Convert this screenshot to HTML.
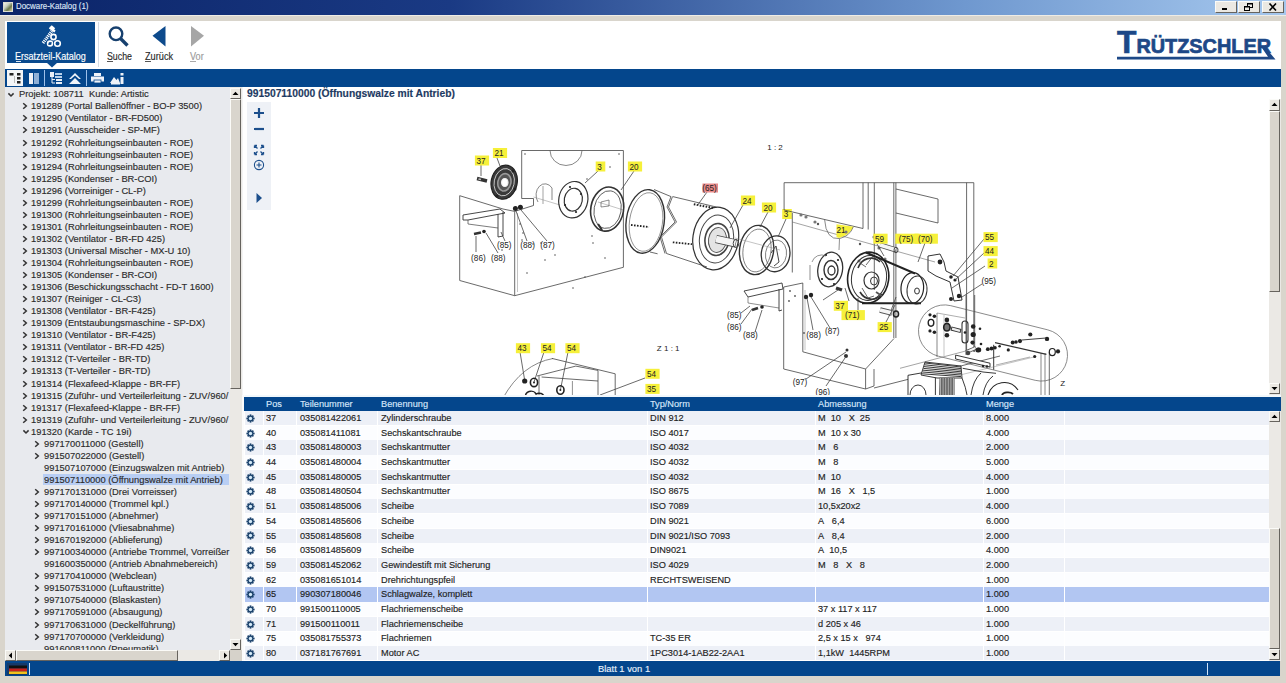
<!DOCTYPE html>
<html><head><meta charset="utf-8"><title>Docware-Katalog</title>
<style>
*{margin:0;padding:0;box-sizing:border-box}
html,body{width:1286px;height:683px;overflow:hidden;position:relative;background:#d9d5cc;font-family:"Liberation Sans",sans-serif;color:#222}
.a{position:absolute}
.t{position:absolute;white-space:pre;line-height:1;-webkit-text-stroke:0.15px currentColor}
.sb{position:absolute;background:#ebe9e5}
.btn{position:absolute;background:#ebe8e2;border-top:1px solid #fbfbf8;border-left:1px solid #fbfbf8;border-right:1px solid #66635e;border-bottom:1px solid #66635e}
</style></head><body>
<div class="a" style="left:0;top:0;width:1286px;height:15px;background:linear-gradient(90deg,#0b2468 0%,#1a3a84 35%,#6f98cf 75%,#a6c8ee 100%)"></div><div class="a" style="left:3px;top:2px;width:10px;height:10px;background:linear-gradient(135deg,#f4f2e8 0%,#c8d0c0 35%,#6c7a4c 65%,#d8d0a0 100%);border:1px solid #dcdcd0"></div><div class="t" style="left:16.3px;top:1.9px;font-size:9.2px;color:#dfe6f6;transform:scaleX(0.86);transform-origin:0 0">Docware-Katalog (1)</div><div class="btn" style="left:1215px;top:1px;width:22px;height:12px"></div><div class="btn" style="left:1238px;top:1px;width:22px;height:12px"></div><div class="btn" style="left:1262px;top:1px;width:22px;height:12px"></div><div class="a" style="left:1222px;top:8px;width:5px;height:2px;background:#000"></div><svg class="a" style="left:1244px;top:3px" width="10" height="8"><rect x="3.5" y="0.5" width="5" height="4" fill="none" stroke="#000"/><rect x="3" y="0" width="6" height="1.5" fill="#000"/><rect x="0.5" y="3.5" width="5" height="4" fill="#ece9e2" stroke="#000"/><rect x="0" y="3" width="6" height="1.5" fill="#000"/></svg><svg class="a" style="left:1268px;top:3px" width="10" height="8"><path d="M1.5 0.5 L8 7.5 M8 0.5 L1.5 7.5" stroke="#000" stroke-width="1.6"/></svg><div class="a" style="left:0;top:15px;width:1286px;height:1px;background:#eeece6"></div><div class="a" style="left:5px;top:21px;width:1276px;height:48px;background:#fff"></div><div class="a" style="left:7px;top:22px;width:88px;height:41px;background:#0a4a8e"></div><svg class="a" style="left:46px;top:62px" width="12" height="6"><path d="M0 0 L6 5.5 L12 0Z" fill="#0a4a8e"/></svg><svg class="a" style="left:38px;top:24px" width="26" height="24" viewBox="0 0 26 24"><g stroke="#fff" fill="none"><path d="M5 19 L14 7" stroke-width="3.2" stroke-dasharray="1.2 0.8"/><path d="M11.5 3.5 L17 7.5 M13 2 L16.5 5" stroke-width="2.2"/><circle cx="15.5" cy="13" r="2.6" stroke-width="1.6"/><circle cx="19.5" cy="19.5" r="2.8" stroke-width="1.6"/><circle cx="12" cy="19.5" r="2.4" stroke-width="1.6"/></g><path d="M10.5 20.5 L13.5 18.5" stroke="#0a4a8e" stroke-width="1"/></svg><div class="t" style="left:15px;top:51.6px;font-size:10.1px;color:#fff;transform:scaleX(0.895);transform-origin:0 0">Ersatzteil-Katalog</div><div class="a" style="left:16px;top:61px;width:5px;height:1px;background:#dfe8f4"></div><div class="a" style="left:107px;top:61px;width:6px;height:1px;background:#555"></div><div class="a" style="left:145px;top:61px;width:6px;height:1px;background:#555"></div><div class="a" style="left:190px;top:61px;width:6px;height:1px;background:#aaa"></div><div class="a" style="left:98px;top:22px;width:1px;height:45px;background:#d4dbe4"></div><svg class="a" style="left:106px;top:25px" width="24" height="23"><circle cx="10" cy="8.8" r="6.3" fill="none" stroke="#17406e" stroke-width="2.4"/><path d="M14.5 13.5 L21.5 20.5" stroke="#17406e" stroke-width="3.4"/></svg><div class="t" style="left:107px;top:51.6px;font-size:10px;color:#2a2a2a;transform:scaleX(0.88);transform-origin:0 0">Suche</div><svg class="a" style="left:152px;top:25px" width="15" height="23"><path d="M0.5 10.8 L13.5 1 L13.5 21.5Z" fill="#0d4a8c"/></svg><div class="t" style="left:145px;top:51.6px;font-size:10px;color:#2a2a2a;transform:scaleX(0.92);transform-origin:0 0">Zurück</div><svg class="a" style="left:190px;top:25px" width="15" height="23"><path d="M1 1 L14 10.8 L1 21.5Z" fill="#a6a6a6"/></svg><div class="t" style="left:190px;top:51.6px;font-size:10px;color:#9a9a9a;transform:scaleX(0.91);transform-origin:0 0">Vor</div><svg class="a" style="left:1110px;top:25px" width="170" height="40" viewBox="0 0 170 40"><text x="7" y="28.4" font-family="Liberation Sans" font-weight="bold" font-size="32" fill="#1d4887" stroke="#1d4887" stroke-width="0.7" textLength="154" lengthAdjust="spacingAndGlyphs">T<tspan font-size="20">RÜTZSCHLER</tspan></text><path d="M7 31.7 L158 31.7 L152 23 L155 22 L165.5 34.6 L7 34.6Z" fill="#1d4887"/></svg><div class="a" style="left:5px;top:69px;width:1276px;height:18px;background:#04468c"></div><div class="a" style="left:7px;top:70px;width:16px;height:16px;background:#f4f6f8"></div><svg class="a" style="left:7px;top:70px" width="16" height="16"><rect x="2.5" y="3" width="4" height="2.5" fill="#222"/><rect x="10" y="3" width="3.5" height="2.5" fill="#222"/><rect x="10" y="7" width="3.5" height="2.5" fill="#222"/><rect x="10" y="11" width="3.5" height="2.5" fill="#222"/><rect x="7" y="6" width="1" height="7" fill="#bbb"/></svg><div class="a" style="left:29px;top:73px;width:4px;height:11px;background:#f0f2f6"></div><div class="a" style="left:34px;top:73px;width:5px;height:11px;background:#8fb0d6"></div><div class="a" style="left:44px;top:70px;width:1px;height:16px;background:#9cc0ea"></div><svg class="a" style="left:50px;top:72px" width="13" height="13"><rect x="0" y="0" width="4" height="5" fill="#e8eef6"/><path d="M2 5 L2 11 L5 11 M2 7.5 L5 7.5" stroke="#e8eef6" fill="none"/><rect x="5" y="1" width="7" height="2" fill="#b8d0ea"/><rect x="5" y="4" width="7" height="2" fill="#b8d0ea"/><rect x="6" y="7" width="6" height="2" fill="#e8eef6"/><rect x="6" y="10" width="6" height="2" fill="#e8eef6"/></svg><svg class="a" style="left:68px;top:72px" width="14" height="13"><path d="M1 7 L7 1 L13 7 L11 7 L7 3.5 L3 7Z M1 12 L7 6 L13 12Z" fill="#f0f4fa"/></svg><div class="a" style="left:86px;top:70px;width:1px;height:16px;background:#9cc0ea"></div><svg class="a" style="left:91px;top:73px" width="13" height="11"><rect x="3" y="0" width="7" height="3" fill="#eef2f8"/><rect x="0" y="3.5" width="13" height="5" fill="#eef2f8"/><rect x="3" y="7" width="7" height="3" fill="#eef2f8" stroke="#04468c" stroke-width="0.8"/></svg><svg class="a" style="left:110px;top:72px" width="14" height="13"><path d="M0 11 L4 5 L6.5 8 L8 6 L10 11Z" fill="#eef2f8"/><rect x="10.5" y="5" width="3" height="7" fill="#eef2f8"/><rect x="10.5" y="1" width="3" height="2.5" fill="#eef2f8"/><rect x="1" y="11" width="9" height="1.5" fill="#eef2f8"/></svg><div class="a" style="left:5px;top:87px;width:225px;height:563px;background:#e8eaee;overflow:hidden"><svg class="a" style="left:2px;top:4.799999999999997px" width="8" height="6"><path d="M1.4 1.4 L4 4 L6.6 1.4" fill="none" stroke="#333" stroke-width="1.5"/></svg><div class="t" style="left:14px;top:3.30px;font-size:9.35px;color:#2c2c2c">Projekt: 108711&nbsp; Kunde: Artistic</div><svg class="a" style="left:16.5px;top:15.349999999999994px" width="6" height="8"><path d="M1.2 1.3 L4.3 4 L1.2 6.7" fill="none" stroke="#333" stroke-width="1.5"/></svg><div class="t" style="left:26px;top:15.35px;font-size:9.35px;color:#2c2c2c">191289 (Portal Ballenöffner - BO-P 3500)</div><svg class="a" style="left:16.5px;top:27.400000000000006px" width="6" height="8"><path d="M1.2 1.3 L4.3 4 L1.2 6.7" fill="none" stroke="#333" stroke-width="1.5"/></svg><div class="t" style="left:26px;top:27.40px;font-size:9.35px;color:#2c2c2c">191290 (Ventilator - BR-FD500)</div><svg class="a" style="left:16.5px;top:39.44999999999999px" width="6" height="8"><path d="M1.2 1.3 L4.3 4 L1.2 6.7" fill="none" stroke="#333" stroke-width="1.5"/></svg><div class="t" style="left:26px;top:39.45px;font-size:9.35px;color:#2c2c2c">191291 (Ausscheider - SP-MF)</div><svg class="a" style="left:16.5px;top:51.5px" width="6" height="8"><path d="M1.2 1.3 L4.3 4 L1.2 6.7" fill="none" stroke="#333" stroke-width="1.5"/></svg><div class="t" style="left:26px;top:51.50px;font-size:9.35px;color:#2c2c2c">191292 (Rohrleitungseinbauten - ROE)</div><svg class="a" style="left:16.5px;top:63.55000000000001px" width="6" height="8"><path d="M1.2 1.3 L4.3 4 L1.2 6.7" fill="none" stroke="#333" stroke-width="1.5"/></svg><div class="t" style="left:26px;top:63.55px;font-size:9.35px;color:#2c2c2c">191293 (Rohrleitungseinbauten - ROE)</div><svg class="a" style="left:16.5px;top:75.60000000000002px" width="6" height="8"><path d="M1.2 1.3 L4.3 4 L1.2 6.7" fill="none" stroke="#333" stroke-width="1.5"/></svg><div class="t" style="left:26px;top:75.60px;font-size:9.35px;color:#2c2c2c">191294 (Rohrleitungseinbauten - ROE)</div><svg class="a" style="left:16.5px;top:87.65px" width="6" height="8"><path d="M1.2 1.3 L4.3 4 L1.2 6.7" fill="none" stroke="#333" stroke-width="1.5"/></svg><div class="t" style="left:26px;top:87.65px;font-size:9.35px;color:#2c2c2c">191295 (Kondenser - BR-COI)</div><svg class="a" style="left:16.5px;top:99.69999999999999px" width="6" height="8"><path d="M1.2 1.3 L4.3 4 L1.2 6.7" fill="none" stroke="#333" stroke-width="1.5"/></svg><div class="t" style="left:26px;top:99.70px;font-size:9.35px;color:#2c2c2c">191296 (Vorreiniger - CL-P)</div><svg class="a" style="left:16.5px;top:111.75px" width="6" height="8"><path d="M1.2 1.3 L4.3 4 L1.2 6.7" fill="none" stroke="#333" stroke-width="1.5"/></svg><div class="t" style="left:26px;top:111.75px;font-size:9.35px;color:#2c2c2c">191299 (Rohrleitungseinbauten - ROE)</div><svg class="a" style="left:16.5px;top:123.80000000000001px" width="6" height="8"><path d="M1.2 1.3 L4.3 4 L1.2 6.7" fill="none" stroke="#333" stroke-width="1.5"/></svg><div class="t" style="left:26px;top:123.80px;font-size:9.35px;color:#2c2c2c">191300 (Rohrleitungseinbauten - ROE)</div><svg class="a" style="left:16.5px;top:135.85000000000002px" width="6" height="8"><path d="M1.2 1.3 L4.3 4 L1.2 6.7" fill="none" stroke="#333" stroke-width="1.5"/></svg><div class="t" style="left:26px;top:135.85px;font-size:9.35px;color:#2c2c2c">191301 (Rohrleitungseinbauten - ROE)</div><svg class="a" style="left:16.5px;top:147.90000000000003px" width="6" height="8"><path d="M1.2 1.3 L4.3 4 L1.2 6.7" fill="none" stroke="#333" stroke-width="1.5"/></svg><div class="t" style="left:26px;top:147.90px;font-size:9.35px;color:#2c2c2c">191302 (Ventilator - BR-FD 425)</div><svg class="a" style="left:16.5px;top:159.95px" width="6" height="8"><path d="M1.2 1.3 L4.3 4 L1.2 6.7" fill="none" stroke="#333" stroke-width="1.5"/></svg><div class="t" style="left:26px;top:159.95px;font-size:9.35px;color:#2c2c2c">191303 (Universal Mischer - MX-U 10)</div><svg class="a" style="left:16.5px;top:172.0px" width="6" height="8"><path d="M1.2 1.3 L4.3 4 L1.2 6.7" fill="none" stroke="#333" stroke-width="1.5"/></svg><div class="t" style="left:26px;top:172.00px;font-size:9.35px;color:#2c2c2c">191304 (Rohrleitungseinbauten - ROE)</div><svg class="a" style="left:16.5px;top:184.05px" width="6" height="8"><path d="M1.2 1.3 L4.3 4 L1.2 6.7" fill="none" stroke="#333" stroke-width="1.5"/></svg><div class="t" style="left:26px;top:184.05px;font-size:9.35px;color:#2c2c2c">191305 (Kondenser - BR-COI)</div><svg class="a" style="left:16.5px;top:196.10000000000002px" width="6" height="8"><path d="M1.2 1.3 L4.3 4 L1.2 6.7" fill="none" stroke="#333" stroke-width="1.5"/></svg><div class="t" style="left:26px;top:196.10px;font-size:9.35px;color:#2c2c2c">191306 (Beschickungsschacht - FD-T 1600)</div><svg class="a" style="left:16.5px;top:208.15000000000003px" width="6" height="8"><path d="M1.2 1.3 L4.3 4 L1.2 6.7" fill="none" stroke="#333" stroke-width="1.5"/></svg><div class="t" style="left:26px;top:208.15px;font-size:9.35px;color:#2c2c2c">191307 (Reiniger - CL-C3)</div><svg class="a" style="left:16.5px;top:220.2px" width="6" height="8"><path d="M1.2 1.3 L4.3 4 L1.2 6.7" fill="none" stroke="#333" stroke-width="1.5"/></svg><div class="t" style="left:26px;top:220.20px;font-size:9.35px;color:#2c2c2c">191308 (Ventilator - BR-F425)</div><svg class="a" style="left:16.5px;top:232.25px" width="6" height="8"><path d="M1.2 1.3 L4.3 4 L1.2 6.7" fill="none" stroke="#333" stroke-width="1.5"/></svg><div class="t" style="left:26px;top:232.25px;font-size:9.35px;color:#2c2c2c">191309 (Entstaubungsmaschine - SP-DX)</div><svg class="a" style="left:16.5px;top:244.3px" width="6" height="8"><path d="M1.2 1.3 L4.3 4 L1.2 6.7" fill="none" stroke="#333" stroke-width="1.5"/></svg><div class="t" style="left:26px;top:244.30px;font-size:9.35px;color:#2c2c2c">191310 (Ventilator - BR-F425)</div><svg class="a" style="left:16.5px;top:256.35px" width="6" height="8"><path d="M1.2 1.3 L4.3 4 L1.2 6.7" fill="none" stroke="#333" stroke-width="1.5"/></svg><div class="t" style="left:26px;top:256.35px;font-size:9.35px;color:#2c2c2c">191311 (Ventilator - BR-FD 425)</div><svg class="a" style="left:16.5px;top:268.40000000000003px" width="6" height="8"><path d="M1.2 1.3 L4.3 4 L1.2 6.7" fill="none" stroke="#333" stroke-width="1.5"/></svg><div class="t" style="left:26px;top:268.40px;font-size:9.35px;color:#2c2c2c">191312 (T-Verteiler - BR-TD)</div><svg class="a" style="left:16.5px;top:280.45000000000005px" width="6" height="8"><path d="M1.2 1.3 L4.3 4 L1.2 6.7" fill="none" stroke="#333" stroke-width="1.5"/></svg><div class="t" style="left:26px;top:280.45px;font-size:9.35px;color:#2c2c2c">191313 (T-Verteiler - BR-TD)</div><svg class="a" style="left:16.5px;top:292.50000000000006px" width="6" height="8"><path d="M1.2 1.3 L4.3 4 L1.2 6.7" fill="none" stroke="#333" stroke-width="1.5"/></svg><div class="t" style="left:26px;top:292.50px;font-size:9.35px;color:#2c2c2c">191314 (Flexafeed-Klappe - BR-FF)</div><svg class="a" style="left:16.5px;top:304.55px" width="6" height="8"><path d="M1.2 1.3 L4.3 4 L1.2 6.7" fill="none" stroke="#333" stroke-width="1.5"/></svg><div class="t" style="left:26px;top:304.55px;font-size:9.35px;color:#2c2c2c">191315 (Zuführ- und Verteilerleitung - ZUV/960/</div><svg class="a" style="left:16.5px;top:316.6px" width="6" height="8"><path d="M1.2 1.3 L4.3 4 L1.2 6.7" fill="none" stroke="#333" stroke-width="1.5"/></svg><div class="t" style="left:26px;top:316.60px;font-size:9.35px;color:#2c2c2c">191317 (Flexafeed-Klappe - BR-FF)</div><svg class="a" style="left:16.5px;top:328.65000000000003px" width="6" height="8"><path d="M1.2 1.3 L4.3 4 L1.2 6.7" fill="none" stroke="#333" stroke-width="1.5"/></svg><div class="t" style="left:26px;top:328.65px;font-size:9.35px;color:#2c2c2c">191319 (Zuführ- und Verteilerleitung - ZUV/960/</div><svg class="a" style="left:17px;top:342.20000000000005px" width="8" height="6"><path d="M1.4 1.4 L4 4 L6.6 1.4" fill="none" stroke="#333" stroke-width="1.5"/></svg><div class="t" style="left:26px;top:340.70px;font-size:9.35px;color:#2c2c2c">191320 (Karde - TC 19i)</div><svg class="a" style="left:28.5px;top:352.75000000000006px" width="6" height="8"><path d="M1.2 1.3 L4.3 4 L1.2 6.7" fill="none" stroke="#333" stroke-width="1.5"/></svg><div class="t" style="left:39px;top:352.75px;font-size:9.35px;color:#2c2c2c">997170011000 (Gestell)</div><svg class="a" style="left:28.5px;top:364.8px" width="6" height="8"><path d="M1.2 1.3 L4.3 4 L1.2 6.7" fill="none" stroke="#333" stroke-width="1.5"/></svg><div class="t" style="left:39px;top:364.80px;font-size:9.35px;color:#2c2c2c">991507022000 (Gestell)</div><div class="t" style="left:39px;top:376.85px;font-size:9.35px;color:#2c2c2c">991507107000 (Einzugswalzen mit Antrieb)</div><div class="a" style="left:38px;top:386.70px;width:186px;height:11px;background:#b8cef4"></div><div class="t" style="left:39px;top:388.90px;font-size:9.35px;color:#2c2c2c">991507110000 (Öffnungswalze mit Antrieb)</div><svg class="a" style="left:28.5px;top:400.95000000000005px" width="6" height="8"><path d="M1.2 1.3 L4.3 4 L1.2 6.7" fill="none" stroke="#333" stroke-width="1.5"/></svg><div class="t" style="left:39px;top:400.95px;font-size:9.35px;color:#2c2c2c">997170131000 (Drei Vorreisser)</div><svg class="a" style="left:28.5px;top:413.00000000000006px" width="6" height="8"><path d="M1.2 1.3 L4.3 4 L1.2 6.7" fill="none" stroke="#333" stroke-width="1.5"/></svg><div class="t" style="left:39px;top:413.00px;font-size:9.35px;color:#2c2c2c">997170140000 (Trommel kpl.)</div><svg class="a" style="left:28.5px;top:425.04999999999995px" width="6" height="8"><path d="M1.2 1.3 L4.3 4 L1.2 6.7" fill="none" stroke="#333" stroke-width="1.5"/></svg><div class="t" style="left:39px;top:425.05px;font-size:9.35px;color:#2c2c2c">997170151000 (Abnehmer)</div><svg class="a" style="left:28.5px;top:437.1px" width="6" height="8"><path d="M1.2 1.3 L4.3 4 L1.2 6.7" fill="none" stroke="#333" stroke-width="1.5"/></svg><div class="t" style="left:39px;top:437.10px;font-size:9.35px;color:#2c2c2c">997170161000 (Vliesabnahme)</div><svg class="a" style="left:28.5px;top:449.15px" width="6" height="8"><path d="M1.2 1.3 L4.3 4 L1.2 6.7" fill="none" stroke="#333" stroke-width="1.5"/></svg><div class="t" style="left:39px;top:449.15px;font-size:9.35px;color:#2c2c2c">991670192000 (Ablieferung)</div><svg class="a" style="left:28.5px;top:461.20000000000005px" width="6" height="8"><path d="M1.2 1.3 L4.3 4 L1.2 6.7" fill="none" stroke="#333" stroke-width="1.5"/></svg><div class="t" style="left:39px;top:461.20px;font-size:9.35px;color:#2c2c2c">997100340000 (Antriebe Trommel, Vorreißer</div><div class="t" style="left:39px;top:473.25px;font-size:9.35px;color:#2c2c2c">991600350000 (Antrieb Abnahmebereich)</div><svg class="a" style="left:28.5px;top:485.29999999999995px" width="6" height="8"><path d="M1.2 1.3 L4.3 4 L1.2 6.7" fill="none" stroke="#333" stroke-width="1.5"/></svg><div class="t" style="left:39px;top:485.30px;font-size:9.35px;color:#2c2c2c">997170410000 (Webclean)</div><svg class="a" style="left:28.5px;top:497.35px" width="6" height="8"><path d="M1.2 1.3 L4.3 4 L1.2 6.7" fill="none" stroke="#333" stroke-width="1.5"/></svg><div class="t" style="left:39px;top:497.35px;font-size:9.35px;color:#2c2c2c">991507531000 (Luftaustritte)</div><svg class="a" style="left:28.5px;top:509.4px" width="6" height="8"><path d="M1.2 1.3 L4.3 4 L1.2 6.7" fill="none" stroke="#333" stroke-width="1.5"/></svg><div class="t" style="left:39px;top:509.40px;font-size:9.35px;color:#2c2c2c">997107540000 (Blaskasten)</div><svg class="a" style="left:28.5px;top:521.4499999999999px" width="6" height="8"><path d="M1.2 1.3 L4.3 4 L1.2 6.7" fill="none" stroke="#333" stroke-width="1.5"/></svg><div class="t" style="left:39px;top:521.45px;font-size:9.35px;color:#2c2c2c">997170591000 (Absaugung)</div><svg class="a" style="left:28.5px;top:533.5px" width="6" height="8"><path d="M1.2 1.3 L4.3 4 L1.2 6.7" fill="none" stroke="#333" stroke-width="1.5"/></svg><div class="t" style="left:39px;top:533.50px;font-size:9.35px;color:#2c2c2c">997170631000 (Deckelführung)</div><svg class="a" style="left:28.5px;top:545.55px" width="6" height="8"><path d="M1.2 1.3 L4.3 4 L1.2 6.7" fill="none" stroke="#333" stroke-width="1.5"/></svg><div class="t" style="left:39px;top:545.55px;font-size:9.35px;color:#2c2c2c">997170700000 (Verkleidung)</div><div class="t" style="left:39px;top:557.60px;font-size:9.35px;color:#2c2c2c">991600811000 (Pneumatik)</div></div><div class="sb" style="left:230px;top:87px;width:12px;height:563px"></div><div class="btn" style="left:230px;top:88px;width:11px;height:11px"></div><svg class="a" style="left:232px;top:91px" width="7" height="5"><path d="M0.5 4 L3.5 0.8 L6.5 4Z" fill="#000"/></svg><div class="btn" style="left:230px;top:99px;width:11px;height:290px;background:#d9d5cd"></div><div class="btn" style="left:230px;top:639px;width:11px;height:11px"></div><svg class="a" style="left:232px;top:642px" width="7" height="5"><path d="M0.5 1 L3.5 4.2 L6.5 1Z" fill="#000"/></svg><div class="sb" style="left:5px;top:650px;width:225px;height:11px"></div><div class="btn" style="left:5px;top:650px;width:11px;height:11px"></div><svg class="a" style="left:8px;top:652px" width="5" height="7"><path d="M4 0.5 L0.8 3.5 L4 6.5Z" fill="#000"/></svg><div class="btn" style="left:16px;top:650px;width:162px;height:11px;background:#d9d5cd"></div><div class="btn" style="left:219px;top:650px;width:11px;height:11px"></div><svg class="a" style="left:223px;top:652px" width="5" height="7"><path d="M1 0.5 L4.2 3.5 L1 6.5Z" fill="#000"/></svg><div class="a" style="left:230px;top:650px;width:12px;height:11px;background:#d6d2ca"></div><div class="a" style="left:242px;top:87px;width:1px;height:574px;background:#f4f4f4"></div><div class="a" style="left:243px;top:87px;width:1026px;height:308px;background:#fff;overflow:hidden"><div class="t" style="left:4px;top:2px;font-size:10.3px;font-weight:bold;color:#1d3a62">991507110000 (Öffnungswalze mit Antrieb)</div><div class="a" style="left:4px;top:15px;width:24px;height:108px;background:#eef1f6"></div><svg class="a" style="left:8px;top:19px" width="16" height="100"><path d="M8 2 V12 M3 7 H13" stroke="#1c4f8c" stroke-width="2.2"/><path d="M3 23 H13" stroke="#1c4f8c" stroke-width="2.2"/><path d="M3.5 39.5 L6.5 42.5 M3.5 39.5 V42 M3.5 39.5 H6 M12.5 39.5 L9.5 42.5 M12.5 39.5 V42 M12.5 39.5 H10 M3.5 48.5 L6.5 45.5 M3.5 48.5 V46 M3.5 48.5 H6 M12.5 48.5 L9.5 45.5 M12.5 48.5 V46 M12.5 48.5 H10" stroke="#1c4f8c" stroke-width="1.3" fill="none"/><circle cx="8" cy="59" r="4.6" fill="none" stroke="#1c4f8c" stroke-width="1.1"/><path d="M8 56.5 V61.5 M5.5 59 H10.5" stroke="#1c4f8c" stroke-width="1.1"/><path d="M5.5 87 L11 92 L5.5 97Z" fill="#1c4f8c"/></svg><svg class="a" style="left:-243px;top:-87px" width="1286" height="683"><path d="M521.7 198.5 L521.7 150.5 L623.4 150.5 L623.4 267.3 L514.7 295.7 L459.7 280.5 L459.7 195.7 L503.0 209.0 L514.7 211.4 L514.7 295.7" fill="none" stroke="#444" stroke-width="0.8"/><path d="M514.7 211.4 L533.5 205.5 L533.5 198.5 L521.7 198.5" fill="none" stroke="#444" stroke-width="0.8"/><path d="M517.5 213.0 L517.5 292.0" fill="none" stroke="#888" stroke-width="0.5"/><path d="M550 150.5 A16 15 0 0 0 582 150.5" fill="none" stroke="#555" stroke-width="0.7"/><path d="M538 202 A8 10 0 0 1 552 188 L552 200" fill="none" stroke="#555" stroke-width="0.7"/><path d="M543.0 186.0 L543.0 204.0" fill="none" stroke="#666" stroke-width="0.6"/><path d="M598.0 202.0 L623.4 210.0" fill="none" stroke="#888" stroke-width="0.5"/><path d="M533.5 197.0 L560.0 205.0" fill="none" stroke="#888" stroke-width="0.5"/><circle cx="525" cy="154" r="0.8" fill="#555"/><circle cx="619" cy="154" r="0.8" fill="#555"/><circle cx="610" cy="167" r="0.8" fill="#555"/><circle cx="587" cy="179" r="0.8" fill="#555"/><circle cx="523" cy="233" r="0.8" fill="#555"/><circle cx="533" cy="244" r="0.8" fill="#555"/><circle cx="541" cy="243" r="0.8" fill="#555"/><circle cx="593" cy="243" r="0.8" fill="#555"/><circle cx="605" cy="258" r="0.8" fill="#555"/><circle cx="585" cy="277" r="0.8" fill="#555"/><circle cx="545" cy="260" r="0.8" fill="#555"/><circle cx="527" cy="273" r="0.8" fill="#555"/><circle cx="573" cy="288" r="0.8" fill="#555"/><circle cx="592" cy="236" r="0.8" fill="#555"/><circle cx="555" cy="255" r="0.8" fill="#555"/><circle cx="502" cy="250" r="0.8" fill="#555"/><circle cx="520" cy="224" r="0.8" fill="#555"/><circle cx="522" cy="240" r="0.8" fill="#555"/><ellipse cx="504.2" cy="182.2" rx="13" ry="17.2" fill="#3a3a3a" stroke="#222" stroke-width="1.2" transform="rotate(12 504.2 182.2)"/><ellipse cx="504.2" cy="182.2" rx="10" ry="13.8" fill="none" stroke="#ddd" stroke-width="0.8" transform="rotate(12 504.2 182.2)"/><ellipse cx="504.4" cy="182.3" rx="6.5" ry="8.8" fill="#555" stroke="#999" stroke-width="1.6" transform="rotate(12 504.4 182.3)"/><ellipse cx="504.8" cy="182.5" rx="3.2" ry="4" fill="#fff" stroke="#eee" stroke-width="1.2"/><circle cx="513" cy="171" r="1.5" fill="#222"/><circle cx="515" cy="189" r="1.5" fill="#222"/><circle cx="497" cy="196" r="1.5" fill="#222"/><path d="M477.0 178.5 L487.0 181.0" fill="none" stroke="#333" stroke-width="3.8"/><path d="M478.5 178.9 L481.0 179.6" fill="none" stroke="#bbb" stroke-width="1.6"/><ellipse cx="573.3" cy="199.7" rx="14.5" ry="18.3" fill="none" stroke="#333" stroke-width="1.2" transform="rotate(10 573.3 199.7)"/><ellipse cx="573.3" cy="199.7" rx="9" ry="11.5" fill="none" stroke="#333" stroke-width="1.2" transform="rotate(10 573.3 199.7)"/><circle cx="570" cy="187" r="1.1" fill="#222"/><circle cx="581" cy="194" r="1.1" fill="#222"/><circle cx="576" cy="212" r="1.1" fill="#222"/><circle cx="565" cy="205" r="1.1" fill="#222"/><ellipse cx="607.2" cy="209.1" rx="16.4" ry="22.2" fill="none" stroke="#333" stroke-width="1.6" transform="rotate(10 607.2 209.1)"/><ellipse cx="607.6" cy="209.6" rx="13.5" ry="19" fill="none" stroke="#444" stroke-width="0.8" transform="rotate(10 607.6 209.6)"/><path d="M601.0 202.0 L609.0 200.0 L609.0 206.0 L601.0 207.0 L601.0 202.0" fill="none" stroke="#444" stroke-width="0.6"/><path d="M598.0 224.0 L602.0 230.0" fill="none" stroke="#333" stroke-width="2.2"/><path d="M463.0 220.0 L463.0 215.0 L500.0 209.0 L505.0 213.0 L468.0 220.0 L463.0 220.0" fill="none" stroke="#333" stroke-width="0.9"/><path d="M498.0 214.0 L498.0 237.0 L503.0 236.0 L503.0 212.0" fill="none" stroke="#333" stroke-width="0.9"/><path d="M468.0 220.0 L468.0 224.0 L498.0 228.0" fill="none" stroke="#444" stroke-width="0.7"/><path d="M474.0 234.0 L481.0 232.5" fill="none" stroke="#333" stroke-width="2.6"/><circle cx="484" cy="231.5" r="1.8" fill="#222"/><circle cx="515.4" cy="208.4" r="2.5" fill="#222"/><circle cx="520.4" cy="207.2" r="2.5" fill="#222"/><path d="M476.0 252.0 L476.0 236.0" fill="none" stroke="#444" stroke-width="0.8"/><path d="M498.0 253.0 L486.0 233.0" fill="none" stroke="#444" stroke-width="0.8"/><path d="M505.0 241.0 L501.0 232.0" fill="none" stroke="#444" stroke-width="0.8"/><path d="M527.0 241.0 L516.0 211.0" fill="none" stroke="#444" stroke-width="0.8"/><path d="M547.0 241.0 L521.0 210.0" fill="none" stroke="#444" stroke-width="0.8"/><path d="M481.0 165.0 L481.0 176.0" fill="none" stroke="#444" stroke-width="0.8"/><path d="M497.0 158.0 L500.0 166.0" fill="none" stroke="#444" stroke-width="0.8"/><path d="M598.0 171.0 L585.0 183.0" fill="none" stroke="#444" stroke-width="0.8"/><path d="M634.0 171.0 L621.0 190.0" fill="none" stroke="#444" stroke-width="0.8"/><text x="504.2" y="248.4" font-family="Liberation Sans" font-size="8.2" fill="#222" text-anchor="middle">(85)</text><text x="527.6" y="248.4" font-family="Liberation Sans" font-size="8.2" fill="#222" text-anchor="middle">(88)</text><text x="547.5" y="248.4" font-family="Liberation Sans" font-size="8.2" fill="#222" text-anchor="middle">(87)</text><text x="478.4" y="261.3" font-family="Liberation Sans" font-size="8.2" fill="#222" text-anchor="middle">(86)</text><text x="498.3" y="261.3" font-family="Liberation Sans" font-size="8.2" fill="#222" text-anchor="middle">(88)</text><rect x="474.9" y="155.5" width="14.2" height="10" fill="#f6f03a"/><text x="481.0" y="163.5" font-family="Liberation Sans" font-size="8.2" fill="#222" text-anchor="middle">37</text><rect x="492.9" y="148.0" width="14.2" height="10" fill="#f6f03a"/><text x="499.0" y="156.0" font-family="Liberation Sans" font-size="8.2" fill="#222" text-anchor="middle">21</text><rect x="595.7" y="161.5" width="9.6" height="10" fill="#f6f03a"/><text x="599.5" y="169.5" font-family="Liberation Sans" font-size="8.2" fill="#222" text-anchor="middle">3</text><rect x="627.9" y="161.5" width="14.2" height="10" fill="#f6f03a"/><text x="634.0" y="169.5" font-family="Liberation Sans" font-size="8.2" fill="#222" text-anchor="middle">20</text><ellipse cx="645.2" cy="221.4" rx="19" ry="32" fill="none" stroke="#333" stroke-width="1.4" transform="rotate(8 645.2 221.4)"/><ellipse cx="646" cy="222" rx="16.5" ry="29.5" fill="none" stroke="#555" stroke-width="0.6" transform="rotate(8 646 222)"/><path d="M654.0 189.5 L671.0 196.6 L667.0 207.0 L675.0 222.0 L660.0 237.0 L665.0 253.5" fill="none" stroke="#444" stroke-width="0.8"/><path d="M672.5 196.6 L668.5 207.0 L676.5 222.0 L661.5 237.0 L666.5 253.5" fill="none" stroke="#444" stroke-width="0.8"/><path d="M672.8 196.6 L716.6 207.1" fill="none" stroke="#444" stroke-width="0.8"/><path d="M650.0 252.0 L657.6 253.8" fill="none" stroke="#444" stroke-width="0.8"/><path d="M666.5 253.5 L707.0 267.0" fill="none" stroke="#444" stroke-width="0.8"/><ellipse cx="715.7" cy="238.5" rx="22.8" ry="31.4" fill="none" stroke="#333" stroke-width="1.2" transform="rotate(8 715.7 238.5)"/><ellipse cx="716.5" cy="239" rx="17" ry="24" fill="none" stroke="#444" stroke-width="1.0" transform="rotate(8 716.5 239)"/><ellipse cx="717" cy="239.5" rx="12" ry="16" fill="none" stroke="#444" stroke-width="1.6" transform="rotate(8 717 239.5)"/><ellipse cx="717.5" cy="240" rx="9" ry="12.5" fill="#e4e4e4" stroke="#555" stroke-width="1.0" transform="rotate(8 717.5 240)"/><path d="M716.0 239.0 L736.0 243.5" fill="none" stroke="#444" stroke-width="8.4"/><path d="M716.0 239.0 L735.5 243.3" fill="none" stroke="#f4f4f4" stroke-width="6.6"/><ellipse cx="736" cy="243.5" rx="2.8" ry="4" fill="none" stroke="#444" stroke-width="1.0"/><path d="M693.8 204.3 L713.7 208" stroke="#222" stroke-width="2" stroke-dasharray="1.6 1.4"/><path d="M631 225 L649 227" stroke="#222" stroke-width="1.8" stroke-dasharray="1.6 1.4"/><path d="M672.8 242.3 L692 244.2" stroke="#222" stroke-width="1.8" stroke-dasharray="1.6 1.4"/><path d="M707.0 192.0 L697.0 206.0" fill="none" stroke="#444" stroke-width="0.8"/><rect x="702.5" y="183.5" width="15.5" height="9" fill="#e98a8a"/><text x="709.5" y="191.0" font-family="Liberation Sans" font-size="8.2" fill="#222" text-anchor="middle">(65)</text><ellipse cx="756.6" cy="250" rx="17" ry="24.7" fill="none" stroke="#333" stroke-width="1.4" transform="rotate(8 756.6 250)"/><ellipse cx="757" cy="250.5" rx="14" ry="21.5" fill="none" stroke="#555" stroke-width="0.7" transform="rotate(8 757 250.5)"/><ellipse cx="775.6" cy="253.8" rx="14.3" ry="18" fill="none" stroke="#333" stroke-width="1.3" transform="rotate(8 775.6 253.8)"/><ellipse cx="776" cy="254" rx="10.5" ry="14" fill="none" stroke="#555" stroke-width="0.7" transform="rotate(8 776 254)"/><path d="M771.0 253.0 L776.0 246.0 L779.0 262.0 L774.0 266.0" fill="none" stroke="#444" stroke-width="1.0"/><path d="M743.0 205.0 L730.0 228.0" fill="none" stroke="#444" stroke-width="0.8"/><path d="M768.0 212.0 L760.0 227.0" fill="none" stroke="#444" stroke-width="0.8"/><path d="M786.0 219.0 L778.0 237.0" fill="none" stroke="#444" stroke-width="0.8"/><rect x="740.9" y="195.5" width="14.2" height="10" fill="#f6f03a"/><text x="747.0" y="203.5" font-family="Liberation Sans" font-size="8.2" fill="#222" text-anchor="middle">24</text><rect x="761.9" y="202.5" width="14.2" height="10" fill="#f6f03a"/><text x="768.0" y="210.5" font-family="Liberation Sans" font-size="8.2" fill="#222" text-anchor="middle">20</text><rect x="782.2" y="209.0" width="9.6" height="10" fill="#f6f03a"/><text x="786.0" y="217.0" font-family="Liberation Sans" font-size="8.2" fill="#222" text-anchor="middle">3</text><path d="M735.0 238.0 L780.0 250.0" fill="none" stroke="#888" stroke-width="0.5"/><text x="775.0" y="149.5" font-family="Liberation Sans" font-size="8" fill="#222" text-anchor="middle">1 : 2</text><path d="M784.1 210.0 L784.1 182.7 L973.8 182.7 L973.8 352.0" fill="none" stroke="#444" stroke-width="0.8"/><path d="M784.1 210.0 L863.0 228.5 L863.0 182.7" fill="none" stroke="#444" stroke-width="0.8"/><path d="M868.2 182.7 L868.2 229.5" fill="none" stroke="#444" stroke-width="0.8"/><path d="M874.3 182.7 L874.3 290.0" fill="none" stroke="#444" stroke-width="0.8"/><path d="M893.8 182.7 L893.8 338.0" fill="none" stroke="#444" stroke-width="0.8"/><path d="M895.9 182.7 L895.9 338.0" fill="none" stroke="#444" stroke-width="0.8"/><path d="M966.6 182.7 L966.6 352.0" fill="none" stroke="#444" stroke-width="0.8"/><path d="M895.9 189.0 L938.0 199.0 L938.0 223.0 L895.9 213.0" fill="none" stroke="#444" stroke-width="0.8"/><path d="M792.3 213.0 L792.3 272.5" fill="none" stroke="#444" stroke-width="0.8"/><path d="M792.3 222.0 L935.0 262.0" fill="none" stroke="#666" stroke-width="0.6"/><path d="M836.5 224.2 L853.5 226.8 Q849 235.5 839 238 L836.5 237 Z" fill="#f6f03a"/><path d="M824.6 219.6 Q826 240 839.5 238.6 Q850 236 853.3 226.8" fill="none" stroke="#555" stroke-width="0.7"/><text x="841.0" y="233.0" font-family="Liberation Sans" font-size="8.2" fill="#222" text-anchor="middle">21</text><path d="M839.5 238.6 L839.0 250.0" fill="none" stroke="#444" stroke-width="0.6"/><circle cx="801" cy="215" r="1.6" fill="#777"/><circle cx="806" cy="217" r="1.6" fill="#777"/><circle cx="815" cy="222" r="1.6" fill="#777"/><circle cx="846" cy="232" r="1.6" fill="#777"/><circle cx="874" cy="237" r="1.6" fill="#777"/><circle cx="880" cy="236" r="1.6" fill="#777"/><circle cx="879" cy="248" r="1.6" fill="#777"/><circle cx="859" cy="261" r="1.6" fill="#777"/><circle cx="885" cy="259" r="1.6" fill="#777"/><circle cx="818" cy="224" r="1.2" fill="#555"/><circle cx="860" cy="244" r="1.2" fill="#555"/><ellipse cx="830.2" cy="269.5" rx="12.3" ry="17.4" fill="none" stroke="#333" stroke-width="1.3" transform="rotate(10 830.2 269.5)"/><ellipse cx="831" cy="270" rx="7" ry="9.5" fill="none" stroke="#333" stroke-width="1.4"/><ellipse cx="831.5" cy="270.5" rx="3.5" ry="4.5" fill="none" stroke="#333" stroke-width="1.3"/><circle cx="826" cy="255" r="1.1" fill="#222"/><circle cx="838" cy="260" r="1.1" fill="#222"/><circle cx="834" cy="284" r="1.1" fill="#222"/><circle cx="822" cy="279" r="1.1" fill="#222"/><path d="M812 262 A10 10 0 0 1 826 256" fill="none" stroke="#666" stroke-width="0.7"/><path d="M810.0 265.0 L810.0 280.0" fill="none" stroke="#444" stroke-width="0.6"/><path d="M836.0 288.0 L842.0 290.0" fill="none" stroke="#333" stroke-width="3.4"/><path d="M823.0 300.0 L838.0 290.0" fill="none" stroke="#444" stroke-width="0.8"/><ellipse cx="868.2" cy="277.7" rx="20.5" ry="25.6" fill="none" stroke="#222" stroke-width="1.6" transform="rotate(8 868.2 277.7)"/><ellipse cx="869" cy="278" rx="17.5" ry="22.5" fill="none" stroke="#333" stroke-width="1.0" transform="rotate(8 869 278)"/><ellipse cx="871.5" cy="280.5" rx="7.5" ry="8.5" fill="none" stroke="#333" stroke-width="1.2"/><ellipse cx="874" cy="281" rx="3.5" ry="4" fill="none" stroke="#333" stroke-width="1.0"/><path d="M858 268 A14 16 0 0 1 880 262" fill="none" stroke="#333" stroke-width="1.6"/><path d="M860 292 A14 16 0 0 0 882 294" fill="none" stroke="#333" stroke-width="1.6"/><path d="M860.0 263.0 L866.0 267.0" fill="none" stroke="#444" stroke-width="0.8"/><path d="M876.0 292.0 L882.0 296.0" fill="none" stroke="#555" stroke-width="1.8"/><path d="M862.0 288.0 L868.0 298.0 L874.0 296.0" fill="none" stroke="#444" stroke-width="0.8"/><path d="M866.0 265.0 L874.0 255.0" fill="none" stroke="#444" stroke-width="0.8"/><ellipse cx="912.3" cy="288" rx="11.3" ry="15.4" fill="none" stroke="#222" stroke-width="1.2" transform="rotate(5 912.3 288)"/><ellipse cx="917" cy="290" rx="10" ry="14" fill="none" stroke="#333" stroke-width="1.0" transform="rotate(5 917 290)"/><ellipse cx="917" cy="291" rx="2.4" ry="3" fill="none" stroke="#333" stroke-width="1.0"/><path d="M866.0 252.5 L915.0 273.5" fill="none" stroke="#222" stroke-width="2.0"/><path d="M862.0 303.3 L921.0 303.3" fill="none" stroke="#222" stroke-width="2.0"/><path d="M889.0 316.0 L896.0 297.0" fill="none" stroke="#444" stroke-width="0.8"/><path d="M925.0 243.0 L918.0 262.0" fill="none" stroke="#444" stroke-width="0.8"/><path d="M880.0 245.0 L896.0 250.0" fill="none" stroke="#555" stroke-width="5.5"/><path d="M880.0 245.0 L895.5 249.8" fill="none" stroke="#f6f6f6" stroke-width="3.8"/><ellipse cx="896" cy="250" rx="2" ry="2.8" fill="none" stroke="#444" stroke-width="1"/><path d="M880.0 310.0 L892.0 313.0" fill="none" stroke="#555" stroke-width="5.5"/><path d="M880.0 310.0 L891.5 312.8" fill="none" stroke="#f6f6f6" stroke-width="3.8"/><ellipse cx="896" cy="314" rx="2.5" ry="3" fill="none" stroke="#222" stroke-width="1.6"/><path d="M877.0 244.0 L884.0 256.0" fill="none" stroke="#444" stroke-width="0.8"/><rect x="873.4" y="233.7" width="14.2" height="10" fill="#f6f03a"/><text x="879.5" y="241.7" font-family="Liberation Sans" font-size="8.2" fill="#222" text-anchor="middle">59</text><rect x="895.3" y="233.7" width="23.4" height="10" fill="#f6f03a"/><text x="906.0" y="241.7" font-family="Liberation Sans" font-size="8.2" fill="#222" text-anchor="middle">(75)</text><rect x="914.5" y="233.7" width="23.4" height="10" fill="#f6f03a"/><text x="925.2" y="241.7" font-family="Liberation Sans" font-size="8.2" fill="#222" text-anchor="middle">(70)</text><rect x="833.8" y="300.8" width="14.2" height="10" fill="#f6f03a"/><text x="839.9" y="308.8" font-family="Liberation Sans" font-size="8.2" fill="#222" text-anchor="middle">37</text><rect x="841.5" y="310.1" width="23.4" height="10" fill="#f6f03a"/><text x="852.2" y="318.1" font-family="Liberation Sans" font-size="8.2" fill="#222" text-anchor="middle">(71)</text><rect x="877.6" y="322.1" width="14.2" height="10" fill="#f6f03a"/><text x="883.7" y="330.1" font-family="Liberation Sans" font-size="8.2" fill="#222" text-anchor="middle">25</text><path d="M928.0 256.0 L940.0 254.0 L944.0 262.0 L946.0 271.0 L958.0 277.0 L962.0 300.0 L954.0 301.0 L950.0 282.0 L936.0 276.0 L928.0 271.0 L928.0 256.0" fill="none" stroke="#333" stroke-width="1.0"/><circle cx="940" cy="262" r="2.4" fill="#222"/><circle cx="951" cy="277" r="1.8" fill="#222"/><circle cx="955" cy="280" r="1.6" fill="#222"/><circle cx="959" cy="296" r="2.2" fill="#222"/><circle cx="951" cy="299" r="2" fill="#222"/><path d="M953.0 276.0 L984.0 239.0" fill="none" stroke="#444" stroke-width="0.8"/><path d="M955.0 280.0 L984.0 253.0" fill="none" stroke="#444" stroke-width="0.8"/><path d="M952.0 288.0 L985.0 266.0" fill="none" stroke="#444" stroke-width="0.8"/><path d="M962.0 297.0 L982.0 284.0" fill="none" stroke="#444" stroke-width="0.8"/><rect x="983.5" y="232.1" width="14.2" height="10" fill="#f6f03a"/><text x="989.6" y="240.1" font-family="Liberation Sans" font-size="8.2" fill="#222" text-anchor="middle">55</text><rect x="983.5" y="246.1" width="14.2" height="10" fill="#f6f03a"/><text x="989.6" y="254.1" font-family="Liberation Sans" font-size="8.2" fill="#222" text-anchor="middle">44</text><rect x="987.6" y="258.5" width="9.6" height="10" fill="#f6f03a"/><text x="991.4" y="266.5" font-family="Liberation Sans" font-size="8.2" fill="#222" text-anchor="middle">2</text><text x="988.8" y="283.6" font-family="Liberation Sans" font-size="8.2" fill="#222" text-anchor="middle">(95)</text><path d="M783.7 287.0 L802.8 283.0 L802.8 351.8 L865.6 369.0 L894.0 338.5" fill="none" stroke="#444" stroke-width="0.8"/><path d="M783.7 287.0 L783.7 369.0 L865.6 389.0 L865.6 369.0" fill="none" stroke="#444" stroke-width="0.8"/><path d="M865.6 389.0 L874.0 386.0 L874.0 369.0" fill="none" stroke="#444" stroke-width="0.8"/><path d="M874.0 388.0 L1000.0 356.0" fill="none" stroke="#444" stroke-width="0.8"/><path d="M805.0 290.0 L805.0 350.0" fill="none" stroke="#888" stroke-width="0.5"/><circle cx="790" cy="291" r="0.9" fill="#555"/><circle cx="795" cy="296" r="0.9" fill="#555"/><circle cx="789" cy="301" r="0.9" fill="#555"/><circle cx="804" cy="333" r="0.9" fill="#555"/><path d="M744.0 291.0 L782.0 283.0 L783.0 289.0 L748.0 297.0 L744.0 291.0" fill="none" stroke="#333" stroke-width="0.9"/><path d="M779.0 289.0 L779.0 311.0 L782.0 310.0" fill="none" stroke="#333" stroke-width="0.9"/><path d="M748.0 297.0 L748.0 303.0 L779.0 308.0" fill="none" stroke="#444" stroke-width="0.6"/><path d="M752.0 310.0 L758.0 308.0" fill="none" stroke="#333" stroke-width="2.6"/><circle cx="762" cy="307" r="1.8" fill="#222"/><circle cx="806" cy="297" r="2.2" fill="#222"/><circle cx="811" cy="295" r="2.2" fill="#222"/><path d="M741.0 313.0 L750.0 306.0" fill="none" stroke="#444" stroke-width="0.8"/><path d="M741.0 324.0 L752.0 309.0" fill="none" stroke="#444" stroke-width="0.8"/><path d="M755.0 332.0 L762.0 310.0" fill="none" stroke="#444" stroke-width="0.8"/><path d="M813.0 330.0 L807.0 298.0" fill="none" stroke="#444" stroke-width="0.8"/><path d="M830.0 328.0 L811.0 297.0" fill="none" stroke="#444" stroke-width="0.8"/><text x="734.3" y="317.7" font-family="Liberation Sans" font-size="8.2" fill="#222" text-anchor="middle">(85)</text><text x="734.3" y="329.7" font-family="Liberation Sans" font-size="8.2" fill="#222" text-anchor="middle">(86)</text><text x="750.4" y="338.0" font-family="Liberation Sans" font-size="8.2" fill="#222" text-anchor="middle">(88)</text><text x="813.6" y="337.7" font-family="Liberation Sans" font-size="8.2" fill="#222" text-anchor="middle">(88)</text><text x="832.3" y="334.3" font-family="Liberation Sans" font-size="8.2" fill="#222" text-anchor="middle">(87)</text><path d="M849.0 301.0 L845.0 288.0" fill="none" stroke="#444" stroke-width="0.8"/><path d="M858.0 310.0 L858.0 298.0" fill="none" stroke="#444" stroke-width="0.8"/><path d="M886.0 322.0 L895.0 305.0" fill="none" stroke="#444" stroke-width="0.8"/><circle cx="847" cy="350" r="1.5" fill="#333"/><circle cx="846" cy="356" r="2" fill="#333"/><path d="M806.0 379.0 L846.0 352.0" fill="none" stroke="#444" stroke-width="0.8"/><path d="M826.0 386.0 L845.0 358.0" fill="none" stroke="#444" stroke-width="0.8"/><text x="800.0" y="385.3" font-family="Liberation Sans" font-size="8.2" fill="#222" text-anchor="middle">(97)</text><text x="822.8" y="394.5" font-family="Liberation Sans" font-size="8.2" fill="#222" text-anchor="middle">(96)</text><rect x="917" y="317" width="152" height="52" rx="26" ry="26" transform="rotate(14 993 343)" fill="none" stroke="#666" stroke-width="0.7"/><path d="M937.0 313.0 L937.0 357.0" fill="none" stroke="#555" stroke-width="0.7"/><path d="M937.0 313.0 L965.0 318.0" fill="none" stroke="#777" stroke-width="0.6"/><path d="M944.0 315.0 L944.0 356.0" fill="none" stroke="#888" stroke-width="0.5"/><path d="M966.0 295.0 L966.0 355.0" fill="none" stroke="#444" stroke-width="0.8"/><path d="M974.7 295.0 L974.7 352.0" fill="none" stroke="#444" stroke-width="0.8"/><path d="M1041.0 353.0 L1041.0 395.0" fill="none" stroke="#555" stroke-width="0.7"/><path d="M1045.0 353.0 L1045.0 395.0" fill="none" stroke="#555" stroke-width="0.7"/><path d="M1049.3 352.0 L1049.3 395.0" fill="none" stroke="#444" stroke-width="0.8"/><path d="M995.0 342.6 L1046.4 354.3" fill="none" stroke="#333" stroke-width="1.2"/><path d="M993.7 344.8 L993.7 369.7" fill="none" stroke="#333" stroke-width="1.0"/><path d="M960.0 375.0 L1034.0 357.0" fill="none" stroke="#888" stroke-width="0.5"/><rect x="962" y="321" width="6" height="22" rx="3" fill="none" stroke="#333" stroke-width="1.1"/><circle cx="930" cy="314.8" r="1.6" fill="#222"/><circle cx="934.4" cy="316.2" r="1.8" fill="#222"/><circle cx="930" cy="330.9" r="1.6" fill="#222"/><circle cx="934.4" cy="332.3" r="1.8" fill="#222"/><circle cx="946.9" cy="319.9" r="2.3" fill="#222"/><circle cx="946.9" cy="335.3" r="2.3" fill="#222"/><circle cx="973.2" cy="326.5" r="2.3" fill="#222"/><circle cx="973.2" cy="334.5" r="2.6" fill="#222"/><circle cx="972.5" cy="342.6" r="2.1" fill="#222"/><circle cx="979" cy="349.9" r="2.3" fill="#222"/><circle cx="987.8" cy="349.2" r="1.9" fill="#222"/><circle cx="991.5" cy="348.5" r="1.9" fill="#222"/><circle cx="995" cy="347.7" r="1.8" fill="#222"/><circle cx="999.6" cy="346.2" r="1.3" fill="#222"/><circle cx="1008.3" cy="349.9" r="1.6" fill="#222"/><circle cx="1012.7" cy="342.6" r="2" fill="#222"/><circle cx="1016" cy="342" r="1.8" fill="#222"/><circle cx="1020" cy="341.1" r="2.1" fill="#222"/><circle cx="1030.3" cy="334.5" r="2.1" fill="#222"/><circle cx="1047" cy="338.9" r="2.2" fill="#222"/><circle cx="1034.7" cy="356.5" r="1.6" fill="#222"/><circle cx="1058" cy="351.4" r="2.1" fill="#222"/><circle cx="980" cy="328.7" r="1.3" fill="#222"/><circle cx="981" cy="344" r="1.3" fill="#222"/><circle cx="965" cy="332.5" r="1.3" fill="#222"/><ellipse cx="931" cy="322.8" rx="2.8" ry="3.4" fill="none" stroke="#222" stroke-width="1.4"/><ellipse cx="946.9" cy="327.2" rx="3.2" ry="3.8" fill="#777" stroke="#222" stroke-width="1.6"/><ellipse cx="1052.3" cy="352.1" rx="3" ry="3.6" fill="none" stroke="#222" stroke-width="1.2"/><path d="M951.0 328.5 L961.0 331.0" fill="none" stroke="#333" stroke-width="4.2"/><path d="M952.0 328.7 L960.0 330.8" fill="none" stroke="#eee" stroke-width="2.4"/><path d="M1022.0 340.0 L1046.0 338.0" fill="none" stroke="#444" stroke-width="1.2"/><path d="M966.0 352.0 L976.0 348.0" fill="none" stroke="#555" stroke-width="3.6"/><path d="M966.5 352.0 L975.5 348.0" fill="none" stroke="#f4f4f4" stroke-width="2"/><path d="M900.0 368.3 L965.7 351.0" fill="none" stroke="#666" stroke-width="0.6"/><path d="M996.0 365.0 L1030.0 357.0" fill="none" stroke="#777" stroke-width="0.6"/><path d="M908 395 L908 375.3 L925 372.3 L935.4 375.3 L935.4 395" fill="#fff" stroke="#222" stroke-width="0.9"/><path d="M910 395 A8 10 0 0 1 926 395" fill="none" stroke="#222" stroke-width="0.9"/><path d="M921 375 L925 362 L961 366 L962 378 L937 378Z" fill="#fff" stroke="#222" stroke-width="0.9"/><path d="M925.0 363.0 L961.0 367.0" fill="none" stroke="#222" stroke-width="0.9"/><path d="M924.5 364.8 L961.0 368.6" fill="none" stroke="#222" stroke-width="0.9"/><path d="M924.0 366.6 L961.0 370.2" fill="none" stroke="#222" stroke-width="0.9"/><path d="M923.5 368.4 L961.0 371.8" fill="none" stroke="#222" stroke-width="0.9"/><path d="M923.0 370.2 L961.0 373.4" fill="none" stroke="#222" stroke-width="0.9"/><path d="M922.5 372.0 L961.0 375.0" fill="none" stroke="#222" stroke-width="0.9"/><path d="M922.0 373.8 L961.0 376.6" fill="none" stroke="#222" stroke-width="0.9"/><path d="M939 395 L939.5 377.5 L954.6 377.5 L954.6 395Z" fill="#666"/><path d="M940.5 378.0 L940.5 395.0" fill="none" stroke="#ccc" stroke-width="0.7"/><path d="M943.1 378.0 L943.1 395.0" fill="none" stroke="#ccc" stroke-width="0.7"/><path d="M945.7 378.0 L945.7 395.0" fill="none" stroke="#ccc" stroke-width="0.7"/><path d="M948.3 378.0 L948.3 395.0" fill="none" stroke="#ccc" stroke-width="0.7"/><path d="M950.9 378.0 L950.9 395.0" fill="none" stroke="#ccc" stroke-width="0.7"/><path d="M953.5 378.0 L953.5 395.0" fill="none" stroke="#ccc" stroke-width="0.7"/><path d="M955.6 355.1 L990 363.2 L990 367 L955.6 359Z" fill="#fff" stroke="#222" stroke-width="0.9"/><circle cx="983" cy="366" r="1.2" fill="#222"/><circle cx="987" cy="366.5" r="1.2" fill="#222"/><path d="M962.7 368.3 L983 372 L996 373.3" fill="none" stroke="#222" stroke-width="0.9"/><path d="M962 378 Q966 388 967 395" fill="none" stroke="#222" stroke-width="0.9"/><path d="M971 395 Q973 380 981 373" fill="none" stroke="#222" stroke-width="0.9"/><path d="M983 395 Q985 382 993 376" fill="none" stroke="#222" stroke-width="0.9"/><path d="M988 395 A17 18 0 0 1 1018 390" fill="none" stroke="#222" stroke-width="1.1"/><path d="M1002 395 A6 3.5 0 0 1 1013 394" fill="none" stroke="#222" stroke-width="1.8"/><circle cx="968" cy="353" r="2.3" fill="#444"/><circle cx="978" cy="350" r="2.5" fill="#222"/><text x="1062.6" y="386.4" font-family="Liberation Sans" font-size="8" fill="#222" text-anchor="middle">Z</text><path d="M503 398 Q522 364 553 358.5" fill="none" stroke="#555" stroke-width="0.7"/><path d="M537.0 376.0 L575.8 366.1 L598.0 370.4 L598.0 398.0" fill="none" stroke="#444" stroke-width="0.8"/><path d="M551.9 358.4 L615.2 373.8 L615.2 398.0" fill="none" stroke="#444" stroke-width="0.8"/><path d="M539.0 376.0 L539.0 398.0" fill="none" stroke="#444" stroke-width="0.8"/><path d="M541.6 377.0 L598.0 381.0" fill="none" stroke="#444" stroke-width="0.8"/><path d="M572.4 381.0 L572.4 398.0" fill="none" stroke="#444" stroke-width="0.6"/><path d="M524.7 380.3 L520.0 352.0" fill="none" stroke="#444" stroke-width="0.8"/><path d="M534.0 382.0 L544.0 352.0" fill="none" stroke="#444" stroke-width="0.8"/><path d="M560.4 390.0 L568.0 352.0" fill="none" stroke="#444" stroke-width="0.8"/><circle cx="524.7" cy="381" r="2.6" fill="#222"/><ellipse cx="534" cy="382.4" rx="3.6" ry="4.2" fill="none" stroke="#222" stroke-width="1.6"/><circle cx="534" cy="382.4" r="1" fill="#222"/><ellipse cx="560.4" cy="390" rx="3.6" ry="4.2" fill="none" stroke="#222" stroke-width="1.6"/><circle cx="560.4" cy="390" r="1" fill="#222"/><path d="M526 397 A5 4 0 0 1 536 394 A5 4 0 0 1 544 397" fill="none" stroke="#222" stroke-width="1.5"/><path d="M600.0 395.0 L645.0 378.0" fill="none" stroke="#444" stroke-width="0.8"/><rect x="515.9" y="343.2" width="14.2" height="10" fill="#f6f03a"/><text x="522.0" y="351.2" font-family="Liberation Sans" font-size="8.2" fill="#222" text-anchor="middle">43</text><rect x="540.9" y="343.2" width="14.2" height="10" fill="#f6f03a"/><text x="547.0" y="351.2" font-family="Liberation Sans" font-size="8.2" fill="#222" text-anchor="middle">54</text><rect x="565.4" y="343.2" width="14.2" height="10" fill="#f6f03a"/><text x="571.5" y="351.2" font-family="Liberation Sans" font-size="8.2" fill="#222" text-anchor="middle">54</text><rect x="645.4" y="368.8" width="14.2" height="10" fill="#f6f03a"/><text x="651.5" y="376.8" font-family="Liberation Sans" font-size="8.2" fill="#222" text-anchor="middle">54</text><rect x="645.4" y="383.9" width="14.2" height="10" fill="#f6f03a"/><text x="651.5" y="391.9" font-family="Liberation Sans" font-size="8.2" fill="#222" text-anchor="middle">35</text><text x="668.2" y="351.2" font-family="Liberation Sans" font-size="8" fill="#222" text-anchor="middle">Z 1 : 1</text></svg></div><div class="a" style="left:1269px;top:87px;width:12px;height:12px;background:#fff"></div><div class="sb" style="left:1269px;top:99px;width:12px;height:296px"></div><div class="btn" style="left:1269px;top:99px;width:11px;height:11.5px"></div><svg class="a" style="left:1271px;top:102px" width="7" height="5"><path d="M0.5 4 L3.5 0.8 L6.5 4Z" fill="#000"/></svg><div class="btn" style="left:1269px;top:110.5px;width:11px;height:181px;background:#d9d5cd"></div><div class="btn" style="left:1269px;top:383px;width:11px;height:11px"></div><svg class="a" style="left:1271px;top:386px" width="7" height="5"><path d="M0.5 1 L3.5 4.2 L6.5 1Z" fill="#000"/></svg><div class="a" style="left:243px;top:395px;width:1038px;height:2px;background:#f2f8fc"></div><div class="a" style="left:242px;top:395px;width:3px;height:266px;background:#fbfbfb"></div><div class="a" style="left:244px;top:397px;width:1037px;height:14px;background:#04468c"></div><div class="t" style="left:266px;top:400px;font-size:9.2px;color:#d6e6fa">Pos</div><div class="t" style="left:300px;top:400px;font-size:9.2px;color:#d6e6fa">Teilenummer</div><div class="t" style="left:381px;top:400px;font-size:9.2px;color:#d6e6fa">Benennung</div><div class="t" style="left:650px;top:400px;font-size:9.2px;color:#d6e6fa">Typ/Norm</div><div class="t" style="left:818px;top:400px;font-size:9.2px;color:#d6e6fa">Abmessung</div><div class="t" style="left:986px;top:400px;font-size:9.2px;color:#d6e6fa">Menge</div><div class="a" style="left:244px;top:411px;width:1025px;height:250px;background:#fff;overflow:hidden"><div class="a" style="left:1px;top:0.00px;width:1024px;height:14.2px;background:#edf0f7"></div><svg class="a" style="left:2px;top:2.8px" width="9" height="9" viewBox="0 0 18 18"><g fill="#1b426c"><circle cx="9" cy="9" r="6"/><rect x="7.3" y="0.8" width="3.4" height="4" transform="rotate(0 9 9)"/><rect x="7.3" y="0.8" width="3.4" height="4" transform="rotate(45 9 9)"/><rect x="7.3" y="0.8" width="3.4" height="4" transform="rotate(90 9 9)"/><rect x="7.3" y="0.8" width="3.4" height="4" transform="rotate(135 9 9)"/><rect x="7.3" y="0.8" width="3.4" height="4" transform="rotate(180 9 9)"/><rect x="7.3" y="0.8" width="3.4" height="4" transform="rotate(225 9 9)"/><rect x="7.3" y="0.8" width="3.4" height="4" transform="rotate(270 9 9)"/><rect x="7.3" y="0.8" width="3.4" height="4" transform="rotate(315 9 9)"/></g><circle cx="9" cy="9" r="3.4" fill="#d4eaf8"/></svg><div class="t" style="left:22px;top:2.90px;font-size:9.2px;color:#1e1e1e">37</div><div class="t" style="left:56px;top:2.90px;font-size:9.2px;color:#1e1e1e">035081422061</div><div class="t" style="left:137px;top:2.90px;font-size:9.2px;color:#1e1e1e">Zylinderschraube</div><div class="t" style="left:406px;top:2.90px;font-size:9.2px;color:#1e1e1e">DIN 912</div><div class="t" style="left:574px;top:2.90px;font-size:9.2px;color:#1e1e1e">M&nbsp; 10&nbsp;&nbsp; X&nbsp; 25</div><div class="t" style="left:742px;top:2.90px;font-size:9.2px;color:#1e1e1e">8.000</div><div class="a" style="left:1px;top:14.70px;width:1024px;height:14.2px;background:#fcfdff"></div><svg class="a" style="left:2px;top:17.5px" width="9" height="9" viewBox="0 0 18 18"><g fill="#1b426c"><circle cx="9" cy="9" r="6"/><rect x="7.3" y="0.8" width="3.4" height="4" transform="rotate(0 9 9)"/><rect x="7.3" y="0.8" width="3.4" height="4" transform="rotate(45 9 9)"/><rect x="7.3" y="0.8" width="3.4" height="4" transform="rotate(90 9 9)"/><rect x="7.3" y="0.8" width="3.4" height="4" transform="rotate(135 9 9)"/><rect x="7.3" y="0.8" width="3.4" height="4" transform="rotate(180 9 9)"/><rect x="7.3" y="0.8" width="3.4" height="4" transform="rotate(225 9 9)"/><rect x="7.3" y="0.8" width="3.4" height="4" transform="rotate(270 9 9)"/><rect x="7.3" y="0.8" width="3.4" height="4" transform="rotate(315 9 9)"/></g><circle cx="9" cy="9" r="3.4" fill="#d4eaf8"/></svg><div class="t" style="left:22px;top:17.60px;font-size:9.2px;color:#1e1e1e">40</div><div class="t" style="left:56px;top:17.60px;font-size:9.2px;color:#1e1e1e">035081411081</div><div class="t" style="left:137px;top:17.60px;font-size:9.2px;color:#1e1e1e">Sechskantschraube</div><div class="t" style="left:406px;top:17.60px;font-size:9.2px;color:#1e1e1e">ISO 4017</div><div class="t" style="left:574px;top:17.60px;font-size:9.2px;color:#1e1e1e">M&nbsp; 10 x 30</div><div class="t" style="left:742px;top:17.60px;font-size:9.2px;color:#1e1e1e">4.000</div><div class="a" style="left:1px;top:29.40px;width:1024px;height:14.2px;background:#edf0f7"></div><svg class="a" style="left:2px;top:32.199999999999996px" width="9" height="9" viewBox="0 0 18 18"><g fill="#1b426c"><circle cx="9" cy="9" r="6"/><rect x="7.3" y="0.8" width="3.4" height="4" transform="rotate(0 9 9)"/><rect x="7.3" y="0.8" width="3.4" height="4" transform="rotate(45 9 9)"/><rect x="7.3" y="0.8" width="3.4" height="4" transform="rotate(90 9 9)"/><rect x="7.3" y="0.8" width="3.4" height="4" transform="rotate(135 9 9)"/><rect x="7.3" y="0.8" width="3.4" height="4" transform="rotate(180 9 9)"/><rect x="7.3" y="0.8" width="3.4" height="4" transform="rotate(225 9 9)"/><rect x="7.3" y="0.8" width="3.4" height="4" transform="rotate(270 9 9)"/><rect x="7.3" y="0.8" width="3.4" height="4" transform="rotate(315 9 9)"/></g><circle cx="9" cy="9" r="3.4" fill="#d4eaf8"/></svg><div class="t" style="left:22px;top:32.30px;font-size:9.2px;color:#1e1e1e">43</div><div class="t" style="left:56px;top:32.30px;font-size:9.2px;color:#1e1e1e">035081480003</div><div class="t" style="left:137px;top:32.30px;font-size:9.2px;color:#1e1e1e">Sechskantmutter</div><div class="t" style="left:406px;top:32.30px;font-size:9.2px;color:#1e1e1e">ISO 4032</div><div class="t" style="left:574px;top:32.30px;font-size:9.2px;color:#1e1e1e">M&nbsp;&nbsp; 6</div><div class="t" style="left:742px;top:32.30px;font-size:9.2px;color:#1e1e1e">2.000</div><div class="a" style="left:1px;top:44.10px;width:1024px;height:14.2px;background:#fcfdff"></div><svg class="a" style="left:2px;top:46.89999999999999px" width="9" height="9" viewBox="0 0 18 18"><g fill="#1b426c"><circle cx="9" cy="9" r="6"/><rect x="7.3" y="0.8" width="3.4" height="4" transform="rotate(0 9 9)"/><rect x="7.3" y="0.8" width="3.4" height="4" transform="rotate(45 9 9)"/><rect x="7.3" y="0.8" width="3.4" height="4" transform="rotate(90 9 9)"/><rect x="7.3" y="0.8" width="3.4" height="4" transform="rotate(135 9 9)"/><rect x="7.3" y="0.8" width="3.4" height="4" transform="rotate(180 9 9)"/><rect x="7.3" y="0.8" width="3.4" height="4" transform="rotate(225 9 9)"/><rect x="7.3" y="0.8" width="3.4" height="4" transform="rotate(270 9 9)"/><rect x="7.3" y="0.8" width="3.4" height="4" transform="rotate(315 9 9)"/></g><circle cx="9" cy="9" r="3.4" fill="#d4eaf8"/></svg><div class="t" style="left:22px;top:47.00px;font-size:9.2px;color:#1e1e1e">44</div><div class="t" style="left:56px;top:47.00px;font-size:9.2px;color:#1e1e1e">035081480004</div><div class="t" style="left:137px;top:47.00px;font-size:9.2px;color:#1e1e1e">Sechskantmutter</div><div class="t" style="left:406px;top:47.00px;font-size:9.2px;color:#1e1e1e">ISO 4032</div><div class="t" style="left:574px;top:47.00px;font-size:9.2px;color:#1e1e1e">M&nbsp;&nbsp; 8</div><div class="t" style="left:742px;top:47.00px;font-size:9.2px;color:#1e1e1e">5.000</div><div class="a" style="left:1px;top:58.80px;width:1024px;height:14.2px;background:#edf0f7"></div><svg class="a" style="left:2px;top:61.599999999999994px" width="9" height="9" viewBox="0 0 18 18"><g fill="#1b426c"><circle cx="9" cy="9" r="6"/><rect x="7.3" y="0.8" width="3.4" height="4" transform="rotate(0 9 9)"/><rect x="7.3" y="0.8" width="3.4" height="4" transform="rotate(45 9 9)"/><rect x="7.3" y="0.8" width="3.4" height="4" transform="rotate(90 9 9)"/><rect x="7.3" y="0.8" width="3.4" height="4" transform="rotate(135 9 9)"/><rect x="7.3" y="0.8" width="3.4" height="4" transform="rotate(180 9 9)"/><rect x="7.3" y="0.8" width="3.4" height="4" transform="rotate(225 9 9)"/><rect x="7.3" y="0.8" width="3.4" height="4" transform="rotate(270 9 9)"/><rect x="7.3" y="0.8" width="3.4" height="4" transform="rotate(315 9 9)"/></g><circle cx="9" cy="9" r="3.4" fill="#d4eaf8"/></svg><div class="t" style="left:22px;top:61.70px;font-size:9.2px;color:#1e1e1e">45</div><div class="t" style="left:56px;top:61.70px;font-size:9.2px;color:#1e1e1e">035081480005</div><div class="t" style="left:137px;top:61.70px;font-size:9.2px;color:#1e1e1e">Sechskantmutter</div><div class="t" style="left:406px;top:61.70px;font-size:9.2px;color:#1e1e1e">ISO 4032</div><div class="t" style="left:574px;top:61.70px;font-size:9.2px;color:#1e1e1e">M&nbsp; 10</div><div class="t" style="left:742px;top:61.70px;font-size:9.2px;color:#1e1e1e">4.000</div><div class="a" style="left:1px;top:73.50px;width:1024px;height:14.2px;background:#fcfdff"></div><svg class="a" style="left:2px;top:76.3px" width="9" height="9" viewBox="0 0 18 18"><g fill="#1b426c"><circle cx="9" cy="9" r="6"/><rect x="7.3" y="0.8" width="3.4" height="4" transform="rotate(0 9 9)"/><rect x="7.3" y="0.8" width="3.4" height="4" transform="rotate(45 9 9)"/><rect x="7.3" y="0.8" width="3.4" height="4" transform="rotate(90 9 9)"/><rect x="7.3" y="0.8" width="3.4" height="4" transform="rotate(135 9 9)"/><rect x="7.3" y="0.8" width="3.4" height="4" transform="rotate(180 9 9)"/><rect x="7.3" y="0.8" width="3.4" height="4" transform="rotate(225 9 9)"/><rect x="7.3" y="0.8" width="3.4" height="4" transform="rotate(270 9 9)"/><rect x="7.3" y="0.8" width="3.4" height="4" transform="rotate(315 9 9)"/></g><circle cx="9" cy="9" r="3.4" fill="#d4eaf8"/></svg><div class="t" style="left:22px;top:76.40px;font-size:9.2px;color:#1e1e1e">48</div><div class="t" style="left:56px;top:76.40px;font-size:9.2px;color:#1e1e1e">035081480504</div><div class="t" style="left:137px;top:76.40px;font-size:9.2px;color:#1e1e1e">Sechskantmutter</div><div class="t" style="left:406px;top:76.40px;font-size:9.2px;color:#1e1e1e">ISO 8675</div><div class="t" style="left:574px;top:76.40px;font-size:9.2px;color:#1e1e1e">M&nbsp; 16&nbsp;&nbsp; X&nbsp;&nbsp; 1,5</div><div class="t" style="left:742px;top:76.40px;font-size:9.2px;color:#1e1e1e">1.000</div><div class="a" style="left:1px;top:88.20px;width:1024px;height:14.2px;background:#edf0f7"></div><svg class="a" style="left:2px;top:90.99999999999999px" width="9" height="9" viewBox="0 0 18 18"><g fill="#1b426c"><circle cx="9" cy="9" r="6"/><rect x="7.3" y="0.8" width="3.4" height="4" transform="rotate(0 9 9)"/><rect x="7.3" y="0.8" width="3.4" height="4" transform="rotate(45 9 9)"/><rect x="7.3" y="0.8" width="3.4" height="4" transform="rotate(90 9 9)"/><rect x="7.3" y="0.8" width="3.4" height="4" transform="rotate(135 9 9)"/><rect x="7.3" y="0.8" width="3.4" height="4" transform="rotate(180 9 9)"/><rect x="7.3" y="0.8" width="3.4" height="4" transform="rotate(225 9 9)"/><rect x="7.3" y="0.8" width="3.4" height="4" transform="rotate(270 9 9)"/><rect x="7.3" y="0.8" width="3.4" height="4" transform="rotate(315 9 9)"/></g><circle cx="9" cy="9" r="3.4" fill="#d4eaf8"/></svg><div class="t" style="left:22px;top:91.10px;font-size:9.2px;color:#1e1e1e">51</div><div class="t" style="left:56px;top:91.10px;font-size:9.2px;color:#1e1e1e">035081485006</div><div class="t" style="left:137px;top:91.10px;font-size:9.2px;color:#1e1e1e">Scheibe</div><div class="t" style="left:406px;top:91.10px;font-size:9.2px;color:#1e1e1e">ISO 7089</div><div class="t" style="left:574px;top:91.10px;font-size:9.2px;color:#1e1e1e">10,5x20x2</div><div class="t" style="left:742px;top:91.10px;font-size:9.2px;color:#1e1e1e">4.000</div><div class="a" style="left:1px;top:102.90px;width:1024px;height:14.2px;background:#fcfdff"></div><svg class="a" style="left:2px;top:105.69999999999999px" width="9" height="9" viewBox="0 0 18 18"><g fill="#1b426c"><circle cx="9" cy="9" r="6"/><rect x="7.3" y="0.8" width="3.4" height="4" transform="rotate(0 9 9)"/><rect x="7.3" y="0.8" width="3.4" height="4" transform="rotate(45 9 9)"/><rect x="7.3" y="0.8" width="3.4" height="4" transform="rotate(90 9 9)"/><rect x="7.3" y="0.8" width="3.4" height="4" transform="rotate(135 9 9)"/><rect x="7.3" y="0.8" width="3.4" height="4" transform="rotate(180 9 9)"/><rect x="7.3" y="0.8" width="3.4" height="4" transform="rotate(225 9 9)"/><rect x="7.3" y="0.8" width="3.4" height="4" transform="rotate(270 9 9)"/><rect x="7.3" y="0.8" width="3.4" height="4" transform="rotate(315 9 9)"/></g><circle cx="9" cy="9" r="3.4" fill="#d4eaf8"/></svg><div class="t" style="left:22px;top:105.80px;font-size:9.2px;color:#1e1e1e">54</div><div class="t" style="left:56px;top:105.80px;font-size:9.2px;color:#1e1e1e">035081485606</div><div class="t" style="left:137px;top:105.80px;font-size:9.2px;color:#1e1e1e">Scheibe</div><div class="t" style="left:406px;top:105.80px;font-size:9.2px;color:#1e1e1e">DIN 9021</div><div class="t" style="left:574px;top:105.80px;font-size:9.2px;color:#1e1e1e">A&nbsp;&nbsp; 6,4</div><div class="t" style="left:742px;top:105.80px;font-size:9.2px;color:#1e1e1e">6.000</div><div class="a" style="left:1px;top:117.60px;width:1024px;height:14.2px;background:#edf0f7"></div><svg class="a" style="left:2px;top:120.39999999999999px" width="9" height="9" viewBox="0 0 18 18"><g fill="#1b426c"><circle cx="9" cy="9" r="6"/><rect x="7.3" y="0.8" width="3.4" height="4" transform="rotate(0 9 9)"/><rect x="7.3" y="0.8" width="3.4" height="4" transform="rotate(45 9 9)"/><rect x="7.3" y="0.8" width="3.4" height="4" transform="rotate(90 9 9)"/><rect x="7.3" y="0.8" width="3.4" height="4" transform="rotate(135 9 9)"/><rect x="7.3" y="0.8" width="3.4" height="4" transform="rotate(180 9 9)"/><rect x="7.3" y="0.8" width="3.4" height="4" transform="rotate(225 9 9)"/><rect x="7.3" y="0.8" width="3.4" height="4" transform="rotate(270 9 9)"/><rect x="7.3" y="0.8" width="3.4" height="4" transform="rotate(315 9 9)"/></g><circle cx="9" cy="9" r="3.4" fill="#d4eaf8"/></svg><div class="t" style="left:22px;top:120.50px;font-size:9.2px;color:#1e1e1e">55</div><div class="t" style="left:56px;top:120.50px;font-size:9.2px;color:#1e1e1e">035081485608</div><div class="t" style="left:137px;top:120.50px;font-size:9.2px;color:#1e1e1e">Scheibe</div><div class="t" style="left:406px;top:120.50px;font-size:9.2px;color:#1e1e1e">DIN 9021/ISO 7093</div><div class="t" style="left:574px;top:120.50px;font-size:9.2px;color:#1e1e1e">A&nbsp;&nbsp; 8,4</div><div class="t" style="left:742px;top:120.50px;font-size:9.2px;color:#1e1e1e">2.000</div><div class="a" style="left:1px;top:132.30px;width:1024px;height:14.2px;background:#fcfdff"></div><svg class="a" style="left:2px;top:135.1px" width="9" height="9" viewBox="0 0 18 18"><g fill="#1b426c"><circle cx="9" cy="9" r="6"/><rect x="7.3" y="0.8" width="3.4" height="4" transform="rotate(0 9 9)"/><rect x="7.3" y="0.8" width="3.4" height="4" transform="rotate(45 9 9)"/><rect x="7.3" y="0.8" width="3.4" height="4" transform="rotate(90 9 9)"/><rect x="7.3" y="0.8" width="3.4" height="4" transform="rotate(135 9 9)"/><rect x="7.3" y="0.8" width="3.4" height="4" transform="rotate(180 9 9)"/><rect x="7.3" y="0.8" width="3.4" height="4" transform="rotate(225 9 9)"/><rect x="7.3" y="0.8" width="3.4" height="4" transform="rotate(270 9 9)"/><rect x="7.3" y="0.8" width="3.4" height="4" transform="rotate(315 9 9)"/></g><circle cx="9" cy="9" r="3.4" fill="#d4eaf8"/></svg><div class="t" style="left:22px;top:135.20px;font-size:9.2px;color:#1e1e1e">56</div><div class="t" style="left:56px;top:135.20px;font-size:9.2px;color:#1e1e1e">035081485609</div><div class="t" style="left:137px;top:135.20px;font-size:9.2px;color:#1e1e1e">Scheibe</div><div class="t" style="left:406px;top:135.20px;font-size:9.2px;color:#1e1e1e">DIN9021</div><div class="t" style="left:574px;top:135.20px;font-size:9.2px;color:#1e1e1e">A&nbsp; 10,5</div><div class="t" style="left:742px;top:135.20px;font-size:9.2px;color:#1e1e1e">4.000</div><div class="a" style="left:1px;top:147.00px;width:1024px;height:14.2px;background:#edf0f7"></div><svg class="a" style="left:2px;top:149.8px" width="9" height="9" viewBox="0 0 18 18"><g fill="#1b426c"><circle cx="9" cy="9" r="6"/><rect x="7.3" y="0.8" width="3.4" height="4" transform="rotate(0 9 9)"/><rect x="7.3" y="0.8" width="3.4" height="4" transform="rotate(45 9 9)"/><rect x="7.3" y="0.8" width="3.4" height="4" transform="rotate(90 9 9)"/><rect x="7.3" y="0.8" width="3.4" height="4" transform="rotate(135 9 9)"/><rect x="7.3" y="0.8" width="3.4" height="4" transform="rotate(180 9 9)"/><rect x="7.3" y="0.8" width="3.4" height="4" transform="rotate(225 9 9)"/><rect x="7.3" y="0.8" width="3.4" height="4" transform="rotate(270 9 9)"/><rect x="7.3" y="0.8" width="3.4" height="4" transform="rotate(315 9 9)"/></g><circle cx="9" cy="9" r="3.4" fill="#d4eaf8"/></svg><div class="t" style="left:22px;top:149.90px;font-size:9.2px;color:#1e1e1e">59</div><div class="t" style="left:56px;top:149.90px;font-size:9.2px;color:#1e1e1e">035081452062</div><div class="t" style="left:137px;top:149.90px;font-size:9.2px;color:#1e1e1e">Gewindestift mit Sicherung</div><div class="t" style="left:406px;top:149.90px;font-size:9.2px;color:#1e1e1e">ISO 4029</div><div class="t" style="left:574px;top:149.90px;font-size:9.2px;color:#1e1e1e">M&nbsp;&nbsp; 8&nbsp;&nbsp; X&nbsp;&nbsp; 8</div><div class="t" style="left:742px;top:149.90px;font-size:9.2px;color:#1e1e1e">2.000</div><div class="a" style="left:1px;top:161.70px;width:1024px;height:14.2px;background:#fcfdff"></div><svg class="a" style="left:2px;top:164.5px" width="9" height="9" viewBox="0 0 18 18"><g fill="#1b426c"><circle cx="9" cy="9" r="6"/><rect x="7.3" y="0.8" width="3.4" height="4" transform="rotate(0 9 9)"/><rect x="7.3" y="0.8" width="3.4" height="4" transform="rotate(45 9 9)"/><rect x="7.3" y="0.8" width="3.4" height="4" transform="rotate(90 9 9)"/><rect x="7.3" y="0.8" width="3.4" height="4" transform="rotate(135 9 9)"/><rect x="7.3" y="0.8" width="3.4" height="4" transform="rotate(180 9 9)"/><rect x="7.3" y="0.8" width="3.4" height="4" transform="rotate(225 9 9)"/><rect x="7.3" y="0.8" width="3.4" height="4" transform="rotate(270 9 9)"/><rect x="7.3" y="0.8" width="3.4" height="4" transform="rotate(315 9 9)"/></g><circle cx="9" cy="9" r="3.4" fill="#d4eaf8"/></svg><div class="t" style="left:22px;top:164.60px;font-size:9.2px;color:#1e1e1e">62</div><div class="t" style="left:56px;top:164.60px;font-size:9.2px;color:#1e1e1e">035081651014</div><div class="t" style="left:137px;top:164.60px;font-size:9.2px;color:#1e1e1e">Drehrichtungspfeil</div><div class="t" style="left:406px;top:164.60px;font-size:9.2px;color:#1e1e1e">RECHTSWEISEND</div><div class="t" style="left:574px;top:164.60px;font-size:9.2px;color:#1e1e1e"></div><div class="t" style="left:742px;top:164.60px;font-size:9.2px;color:#1e1e1e">1.000</div><div class="a" style="left:1px;top:176.40px;width:1024px;height:14.2px;background:#b2c6f2"></div><svg class="a" style="left:2px;top:179.2px" width="9" height="9" viewBox="0 0 18 18"><g fill="#1b426c"><circle cx="9" cy="9" r="6"/><rect x="7.3" y="0.8" width="3.4" height="4" transform="rotate(0 9 9)"/><rect x="7.3" y="0.8" width="3.4" height="4" transform="rotate(45 9 9)"/><rect x="7.3" y="0.8" width="3.4" height="4" transform="rotate(90 9 9)"/><rect x="7.3" y="0.8" width="3.4" height="4" transform="rotate(135 9 9)"/><rect x="7.3" y="0.8" width="3.4" height="4" transform="rotate(180 9 9)"/><rect x="7.3" y="0.8" width="3.4" height="4" transform="rotate(225 9 9)"/><rect x="7.3" y="0.8" width="3.4" height="4" transform="rotate(270 9 9)"/><rect x="7.3" y="0.8" width="3.4" height="4" transform="rotate(315 9 9)"/></g><circle cx="9" cy="9" r="3.4" fill="#d4eaf8"/></svg><div class="t" style="left:22px;top:179.30px;font-size:9.2px;color:#1e1e1e">65</div><div class="t" style="left:56px;top:179.30px;font-size:9.2px;color:#1e1e1e">990307180046</div><div class="t" style="left:137px;top:179.30px;font-size:9.2px;color:#1e1e1e">Schlagwalze, komplett</div><div class="t" style="left:406px;top:179.30px;font-size:9.2px;color:#1e1e1e"></div><div class="t" style="left:574px;top:179.30px;font-size:9.2px;color:#1e1e1e"></div><div class="t" style="left:742px;top:179.30px;font-size:9.2px;color:#1e1e1e">1.000</div><div class="a" style="left:1px;top:191.10px;width:1024px;height:14.2px;background:#fcfdff"></div><svg class="a" style="left:2px;top:193.9px" width="9" height="9" viewBox="0 0 18 18"><g fill="#1b426c"><circle cx="9" cy="9" r="6"/><rect x="7.3" y="0.8" width="3.4" height="4" transform="rotate(0 9 9)"/><rect x="7.3" y="0.8" width="3.4" height="4" transform="rotate(45 9 9)"/><rect x="7.3" y="0.8" width="3.4" height="4" transform="rotate(90 9 9)"/><rect x="7.3" y="0.8" width="3.4" height="4" transform="rotate(135 9 9)"/><rect x="7.3" y="0.8" width="3.4" height="4" transform="rotate(180 9 9)"/><rect x="7.3" y="0.8" width="3.4" height="4" transform="rotate(225 9 9)"/><rect x="7.3" y="0.8" width="3.4" height="4" transform="rotate(270 9 9)"/><rect x="7.3" y="0.8" width="3.4" height="4" transform="rotate(315 9 9)"/></g><circle cx="9" cy="9" r="3.4" fill="#d4eaf8"/></svg><div class="t" style="left:22px;top:194.00px;font-size:9.2px;color:#1e1e1e">70</div><div class="t" style="left:56px;top:194.00px;font-size:9.2px;color:#1e1e1e">991500110005</div><div class="t" style="left:137px;top:194.00px;font-size:9.2px;color:#1e1e1e">Flachriemenscheibe</div><div class="t" style="left:406px;top:194.00px;font-size:9.2px;color:#1e1e1e"></div><div class="t" style="left:574px;top:194.00px;font-size:9.2px;color:#1e1e1e">37 x 117 x 117</div><div class="t" style="left:742px;top:194.00px;font-size:9.2px;color:#1e1e1e">1.000</div><div class="a" style="left:1px;top:205.80px;width:1024px;height:14.2px;background:#edf0f7"></div><svg class="a" style="left:2px;top:208.6px" width="9" height="9" viewBox="0 0 18 18"><g fill="#1b426c"><circle cx="9" cy="9" r="6"/><rect x="7.3" y="0.8" width="3.4" height="4" transform="rotate(0 9 9)"/><rect x="7.3" y="0.8" width="3.4" height="4" transform="rotate(45 9 9)"/><rect x="7.3" y="0.8" width="3.4" height="4" transform="rotate(90 9 9)"/><rect x="7.3" y="0.8" width="3.4" height="4" transform="rotate(135 9 9)"/><rect x="7.3" y="0.8" width="3.4" height="4" transform="rotate(180 9 9)"/><rect x="7.3" y="0.8" width="3.4" height="4" transform="rotate(225 9 9)"/><rect x="7.3" y="0.8" width="3.4" height="4" transform="rotate(270 9 9)"/><rect x="7.3" y="0.8" width="3.4" height="4" transform="rotate(315 9 9)"/></g><circle cx="9" cy="9" r="3.4" fill="#d4eaf8"/></svg><div class="t" style="left:22px;top:208.70px;font-size:9.2px;color:#1e1e1e">71</div><div class="t" style="left:56px;top:208.70px;font-size:9.2px;color:#1e1e1e">991500110011</div><div class="t" style="left:137px;top:208.70px;font-size:9.2px;color:#1e1e1e">Flachriemenscheibe</div><div class="t" style="left:406px;top:208.70px;font-size:9.2px;color:#1e1e1e"></div><div class="t" style="left:574px;top:208.70px;font-size:9.2px;color:#1e1e1e">d 205 x 46</div><div class="t" style="left:742px;top:208.70px;font-size:9.2px;color:#1e1e1e">1.000</div><div class="a" style="left:1px;top:220.50px;width:1024px;height:14.2px;background:#fcfdff"></div><svg class="a" style="left:2px;top:223.3px" width="9" height="9" viewBox="0 0 18 18"><g fill="#1b426c"><circle cx="9" cy="9" r="6"/><rect x="7.3" y="0.8" width="3.4" height="4" transform="rotate(0 9 9)"/><rect x="7.3" y="0.8" width="3.4" height="4" transform="rotate(45 9 9)"/><rect x="7.3" y="0.8" width="3.4" height="4" transform="rotate(90 9 9)"/><rect x="7.3" y="0.8" width="3.4" height="4" transform="rotate(135 9 9)"/><rect x="7.3" y="0.8" width="3.4" height="4" transform="rotate(180 9 9)"/><rect x="7.3" y="0.8" width="3.4" height="4" transform="rotate(225 9 9)"/><rect x="7.3" y="0.8" width="3.4" height="4" transform="rotate(270 9 9)"/><rect x="7.3" y="0.8" width="3.4" height="4" transform="rotate(315 9 9)"/></g><circle cx="9" cy="9" r="3.4" fill="#d4eaf8"/></svg><div class="t" style="left:22px;top:223.40px;font-size:9.2px;color:#1e1e1e">75</div><div class="t" style="left:56px;top:223.40px;font-size:9.2px;color:#1e1e1e">035081755373</div><div class="t" style="left:137px;top:223.40px;font-size:9.2px;color:#1e1e1e">Flachriemen</div><div class="t" style="left:406px;top:223.40px;font-size:9.2px;color:#1e1e1e">TC-35 ER</div><div class="t" style="left:574px;top:223.40px;font-size:9.2px;color:#1e1e1e">2,5 x 15 x&nbsp;&nbsp; 974</div><div class="t" style="left:742px;top:223.40px;font-size:9.2px;color:#1e1e1e">1.000</div><div class="a" style="left:1px;top:235.20px;width:1024px;height:14.2px;background:#edf0f7"></div><svg class="a" style="left:2px;top:238.0px" width="9" height="9" viewBox="0 0 18 18"><g fill="#1b426c"><circle cx="9" cy="9" r="6"/><rect x="7.3" y="0.8" width="3.4" height="4" transform="rotate(0 9 9)"/><rect x="7.3" y="0.8" width="3.4" height="4" transform="rotate(45 9 9)"/><rect x="7.3" y="0.8" width="3.4" height="4" transform="rotate(90 9 9)"/><rect x="7.3" y="0.8" width="3.4" height="4" transform="rotate(135 9 9)"/><rect x="7.3" y="0.8" width="3.4" height="4" transform="rotate(180 9 9)"/><rect x="7.3" y="0.8" width="3.4" height="4" transform="rotate(225 9 9)"/><rect x="7.3" y="0.8" width="3.4" height="4" transform="rotate(270 9 9)"/><rect x="7.3" y="0.8" width="3.4" height="4" transform="rotate(315 9 9)"/></g><circle cx="9" cy="9" r="3.4" fill="#d4eaf8"/></svg><div class="t" style="left:22px;top:238.10px;font-size:9.2px;color:#1e1e1e">80</div><div class="t" style="left:56px;top:238.10px;font-size:9.2px;color:#1e1e1e">037181767691</div><div class="t" style="left:137px;top:238.10px;font-size:9.2px;color:#1e1e1e">Motor AC</div><div class="t" style="left:406px;top:238.10px;font-size:9.2px;color:#1e1e1e">1PC3014-1AB22-2AA1</div><div class="t" style="left:574px;top:238.10px;font-size:9.2px;color:#1e1e1e">1,1kW&nbsp; 1445RPM</div><div class="t" style="left:742px;top:238.10px;font-size:9.2px;color:#1e1e1e">1.000</div><div class="a" style="left:19px;top:0;width:1px;height:250px;background:#fff"></div><div class="a" style="left:52px;top:0;width:1px;height:250px;background:#fff"></div><div class="a" style="left:133px;top:0;width:1px;height:250px;background:#fff"></div><div class="a" style="left:403px;top:0;width:1px;height:250px;background:#fff"></div><div class="a" style="left:571px;top:0;width:1px;height:250px;background:#fff"></div><div class="a" style="left:739px;top:0;width:1px;height:250px;background:#fff"></div><div class="a" style="left:820px;top:0;width:1px;height:250px;background:#fff"></div></div><div class="sb" style="left:1269px;top:411px;width:12px;height:250px"></div><div class="btn" style="left:1269px;top:411px;width:11px;height:11px"></div><svg class="a" style="left:1271px;top:414px" width="7" height="5"><path d="M0.5 4 L3.5 0.8 L6.5 4Z" fill="#000"/></svg><div class="btn" style="left:1269px;top:528px;width:11px;height:121px;background:#d9d5cd"></div><div class="btn" style="left:1269px;top:649px;width:11px;height:11px"></div><svg class="a" style="left:1271px;top:652px" width="7" height="5"><path d="M0.5 1 L3.5 4.2 L6.5 1Z" fill="#000"/></svg><div class="a" style="left:5px;top:661px;width:1275px;height:15px;background:#04468c"></div><svg class="a" style="left:7px;top:663px" width="20" height="12"><rect x="0" y="0" width="20" height="12" fill="#163a6a"/><rect x="2" y="2.5" width="18" height="3" fill="#111"/><rect x="2" y="5.5" width="18" height="3" fill="#c8201a"/><rect x="2" y="8.5" width="18" height="2.5" fill="#f2c21c"/></svg><div class="a" style="left:29px;top:663px;width:1px;height:12px;background:#cfe3f8"></div><div class="t" style="left:598px;top:664px;font-size:9.4px;color:#e6f0fb">Blatt 1 von 1</div><div class="a" style="left:1207px;top:663px;width:1px;height:12px;background:#cfe3f8"></div></body></html>
